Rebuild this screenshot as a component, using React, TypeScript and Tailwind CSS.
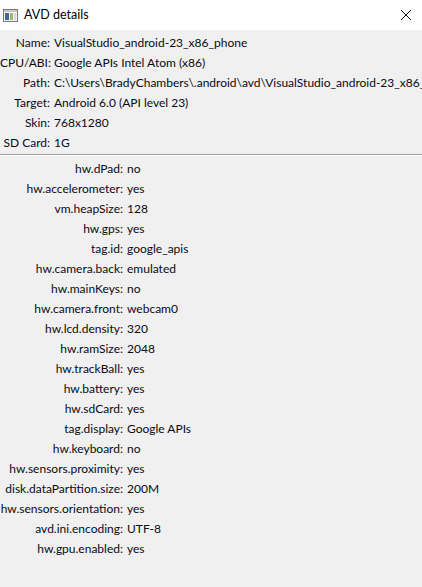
const general = [
  ["Name", "VisualStudio_android-23_x86_phone"],
  ["CPU/ABI", "Google APIs Intel Atom (x86)"],
  ["Path", "C:\\Users\\BradyChambers\\.android\\avd\\VisualStudio_android-23_x86_phone.avd"],
  ["Target", "Android 6.0 (API level 23)"],
  ["Skin", "768x1280"],
  ["SD Card", "1G"],
];

const props = [
  ["hw.dPad", "no"],
  ["hw.accelerometer", "yes"],
  ["vm.heapSize", "128"],
  ["hw.gps", "yes"],
  ["tag.id", "google_apis"],
  ["hw.camera.back", "emulated"],
  ["hw.mainKeys", "no"],
  ["hw.camera.front", "webcam0"],
  ["hw.lcd.density", "320"],
  ["hw.ramSize", "2048"],
  ["hw.trackBall", "yes"],
  ["hw.battery", "yes"],
  ["hw.sdCard", "yes"],
  ["tag.display", "Google APIs"],
  ["hw.keyboard", "no"],
  ["hw.sensors.proximity", "yes"],
  ["disk.dataPartition.size", "200M"],
  ["hw.sensors.orientation", "yes"],
  ["avd.ini.encoding", "UTF-8"],
  ["hw.gpu.enabled", "yes"],
];

const WindowIcon = () => (
  <svg width="15" height="13" viewBox="0 0 15 13" className="shrink-0">
    <rect x="0.5" y="0.5" width="14" height="12" fill="#f4f4f4" stroke="#7a7a7a" />
    <rect x="1" y="1" width="13" height="2" fill="#c8c8c8" />
    <rect x="2" y="4" width="4" height="7" fill="#3e6e8c" />
    <rect x="7" y="4" width="3" height="7" fill="#9bb86c" />
    <rect x="11" y="4" width="2" height="7" fill="#d8d8d8" />
  </svg>
);

export default function App() {
  return (
    <div
      className="w-[422px] h-[587px] overflow-hidden bg-[#f0f0f0] text-[12px] text-[#0a0a14]"
      style={{ fontFamily: 'Lato, "Noto Sans", sans-serif' }}
    >
      {/* Title bar */}
      <div className="h-[30px] bg-white flex items-center pl-[3px]">
        <WindowIcon />
        <span className="ml-[6px] text-[12.5px] text-black">AVD details</span>
        <div className="ml-auto w-[30px] flex justify-center pr-[2px]">
          <svg width="12" height="12" viewBox="0 0 12 12">
            <path d="M1 1L11 11M11 1L1 11" stroke="#111" strokeWidth="1" />
          </svg>
        </div>
      </div>

      {/* General info */}
      <div className="pt-[3px] pb-[1px]">
        {general.map(([k, v]) => (
          <div key={k} className="h-[20px] flex items-center whitespace-nowrap">
            <span className="w-[50px] shrink-0 text-right">{k}:</span>
            <span className="ml-[4px]">{v}</span>
          </div>
        ))}
      </div>

      <div className="h-px bg-[#a0a0a0]" />
      <div className="h-px bg-white" />

      {/* Properties */}
      <div className="pt-[3px]">
        {props.map(([k, v]) => (
          <div key={k} className="h-[20px] flex items-center whitespace-nowrap">
            <span className="w-[123px] shrink-0 text-right">{k}:</span>
            <span className="ml-[4px]">{v}</span>
          </div>
        ))}
      </div>
    </div>
  );
}
